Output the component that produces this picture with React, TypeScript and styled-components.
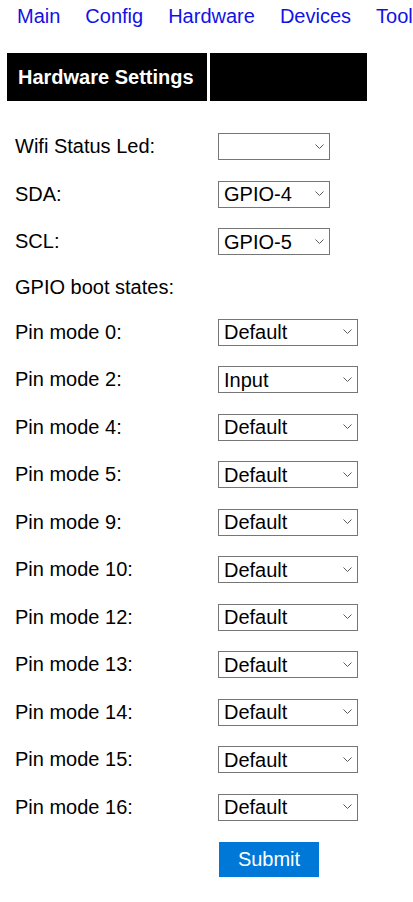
import React from "react";
import styled, { createGlobalStyle } from "styled-components";

const Global = createGlobalStyle`
  html, body { margin: 0; padding: 0; background: #fff; }
  body { font-family: "Liberation Sans", Arial, sans-serif; font-size: 20px; color: #000; }
`;

const Page = styled.div`
  width: 413px;
  overflow: hidden;
`;

const Nav = styled.nav`
  display: flex;
  padding: 5px 0 0 4.5px;
  white-space: nowrap;
`;

const NavLink = styled.a`
  color: #1212e6;
  text-decoration: none;
  font-size: 20px;
  line-height: 23px;
  padding: 0 12.5px;
`;

const Header = styled.div`
  display: flex;
  gap: 3px;
  margin: 25px 0 0 7px;
`;

const HeaderCell = styled.div<{ $w: number }>`
  width: ${(p) => p.$w}px;
  height: 48px;
  background: #000;
  color: #fff;
  font-weight: bold;
  font-size: 20px;
  display: flex;
  align-items: center;
  padding-left: 11px;
  box-sizing: border-box;
`;

const Form = styled.form`
  display: grid;
  grid-template-columns: 203px auto;
  margin-top: 22px;
  padding-left: 15px;
`;

const Label = styled.div<{ $h?: number }>`
  height: ${(p) => p.$h ?? 47.5}px;
  display: flex;
  align-items: center;
  font-size: 20px;
  white-space: nowrap;
`;

const Cell = styled.div<{ $h?: number }>`
  height: ${(p) => p.$h ?? 47.5}px;
  display: flex;
  align-items: center;
`;

const SelectWrap = styled.div<{ $w: number }>`
  position: relative;
  width: ${(p) => p.$w}px;
  height: 27px;
`;

const Select = styled.select`
  appearance: none;
  -webkit-appearance: none;
  width: 100%;
  height: 100%;
  box-sizing: border-box;
  border: 1px solid #767676;
  border-radius: 0;
  background: #fff;
  color: #000;
  font-family: "Liberation Sans", Arial, sans-serif;
  font-size: 20px;
  padding: 0 0 0 5px;
  margin: 0;
  outline: none;
`;

const Chevron = styled.svg`
  position: absolute;
  right: 6px;
  top: 50%;
  margin-top: -3px;
  width: 9px;
  height: 5px;
  pointer-events: none;
`;

const SubmitButton = styled.button`
  width: 100px;
  height: 35px;
  margin: 11px 0 0 1px;
  background: #0078d7;
  color: #fff;
  border: none;
  border-radius: 0;
  font-family: "Liberation Sans", Arial, sans-serif;
  font-size: 20px;
  padding: 0;
`;

const Spacer = styled.div``;

const Drop: React.FC<{ w: number; value: string; options: string[] }> = ({ w, value, options }) => (
  <SelectWrap $w={w}>
    <Select defaultValue={value}>
      {options.map((o) => (
        <option key={o} value={o}>
          {o}
        </option>
      ))}
    </Select>
    <Chevron viewBox="0 0 9 5">
      <path d="M0.5 0.5 L4.5 4.5 L8.5 0.5" fill="none" stroke="#5a5a5a" strokeWidth="1" />
    </Chevron>
  </SelectWrap>
);

const gpio = ["", "GPIO-0", "GPIO-1", "GPIO-2", "GPIO-3", "GPIO-4", "GPIO-5", "GPIO-9", "GPIO-10", "GPIO-12", "GPIO-13", "GPIO-14", "GPIO-15", "GPIO-16"];
const modes = ["Default", "Output Low", "Output High", "Input"];

const pins: { n: number; v: string }[] = [
  { n: 0, v: "Default" },
  { n: 2, v: "Input" },
  { n: 4, v: "Default" },
  { n: 5, v: "Default" },
  { n: 9, v: "Default" },
  { n: 10, v: "Default" },
  { n: 12, v: "Default" },
  { n: 13, v: "Default" },
  { n: 14, v: "Default" },
  { n: 15, v: "Default" },
  { n: 16, v: "Default" },
];

export default function App() {
  return (
    <Page>
      <Global />
      <Nav>
        {["Main", "Config", "Hardware", "Devices", "Tools"].map((t) => (
          <NavLink key={t} href="#">
            {t}
          </NavLink>
        ))}
      </Nav>
      <Header>
        <HeaderCell $w={200}>Hardware Settings</HeaderCell>
        <HeaderCell $w={157} />
      </Header>
      <Form onSubmit={(e) => e.preventDefault()}>
        <Label>Wifi Status Led:</Label>
        <Cell>
          <Drop w={112} value="" options={gpio} />
        </Cell>
        <Label>SDA:</Label>
        <Cell>
          <Drop w={112} value="GPIO-4" options={gpio} />
        </Cell>
        <Label>SCL:</Label>
        <Cell>
          <Drop w={112} value="GPIO-5" options={gpio} />
        </Cell>
        <Label $h={43}>GPIO boot states:</Label>
        <Cell $h={43} />
        {pins.map((p) => (
          <React.Fragment key={p.n}>
            <Label>Pin mode {p.n}:</Label>
            <Cell>
              <Drop w={140} value={p.v} options={modes} />
            </Cell>
          </React.Fragment>
        ))}
        <Spacer />
        <div>
          <SubmitButton type="submit">Submit</SubmitButton>
        </div>
      </Form>
    </Page>
  );
}
